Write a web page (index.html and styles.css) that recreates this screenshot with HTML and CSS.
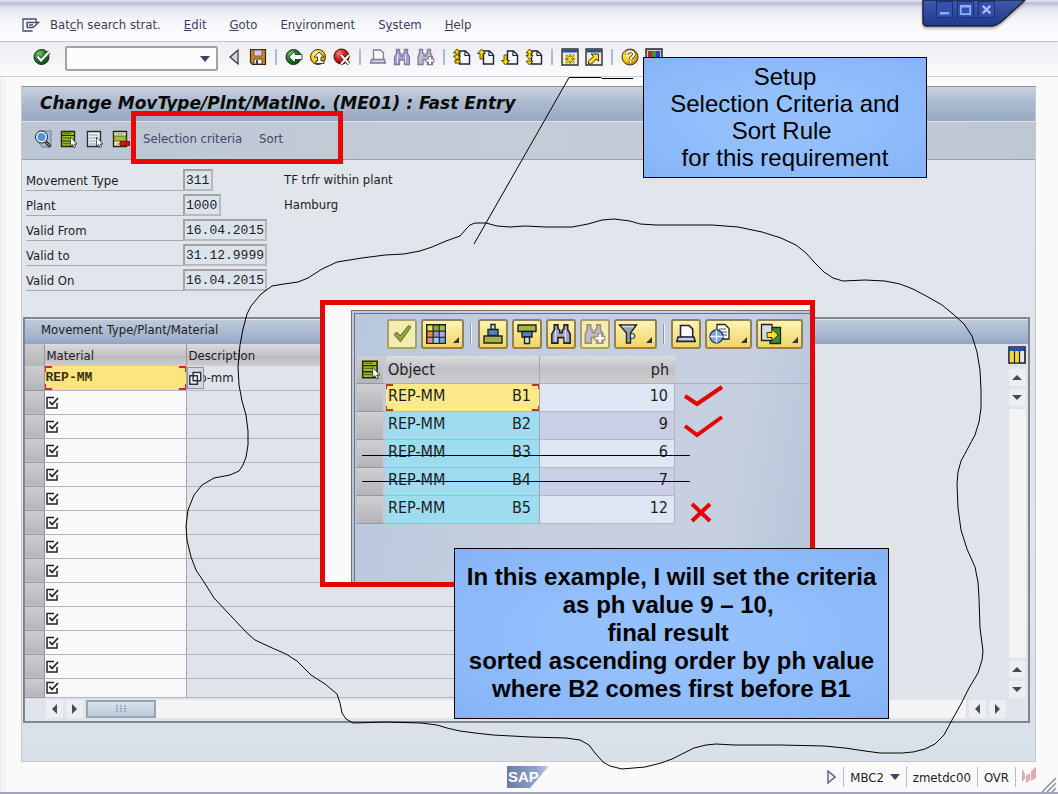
FILE: index.html
```html
<!DOCTYPE html>
<html lang="en">
<head>
  <meta charset="UTF-8">
  <meta name="viewport" content="width=device-width, initial-scale=1.0">
  <title>Change MovType/Plnt/MatlNo. (ME01) : Fast Entry</title>
  <link rel="stylesheet" href="styles.css">
</head>
<body>

  <!-- icon set -->
  <svg class="icon-defs" width="0" height="0" aria-hidden="true">
    <defs>
      <radialGradient id="gGreen" cx="0.35" cy="0.3" r="0.8"><stop offset="0" stop-color="#7fc46f"/><stop offset="0.5" stop-color="#1f7a28"/><stop offset="1" stop-color="#0b3d12"/></radialGradient>
      <radialGradient id="gYellow" cx="0.35" cy="0.3" r="0.8"><stop offset="0" stop-color="#fff58a"/><stop offset="0.6" stop-color="#eec21a"/><stop offset="1" stop-color="#a87608"/></radialGradient>
      <radialGradient id="gRed" cx="0.35" cy="0.3" r="0.8"><stop offset="0" stop-color="#f08080"/><stop offset="0.5" stop-color="#cf1a1a"/><stop offset="1" stop-color="#7a0808"/></radialGradient>
      <linearGradient id="gSap" x1="0" y1="0" x2="1" y2="0"><stop offset="0" stop-color="#6a7ca6"/><stop offset="0.7" stop-color="#8fa3cc"/><stop offset="1" stop-color="#c3d0ea"/></linearGradient>
      <linearGradient id="gCtl" x1="0" y1="0" x2="0" y2="1"><stop offset="0" stop-color="#3f59ae"/><stop offset="1" stop-color="#22398c"/></linearGradient>
    </defs>
    <symbol id="i-menu" viewBox="0 0 18 14"><path d="M14 4.500V1H1v12h9.500M5 4.500h11.500L11 9.500H5.500zM5 4.500v5M7 7h4" fill="none" stroke="#4a4b6c" stroke-width="1.300"/></symbol>
    <symbol id="i-ok" viewBox="0 0 18 18"><circle cx="8.500" cy="9" r="7.500" fill="url(#gGreen)" stroke="#0c3512"/><path d="M4.500 8.500l3.500 4L16 4" fill="none" stroke="#1a3a1a" stroke-width="4"/><path d="M4.500 8.500l3.500 4L16 4" fill="none" stroke="#fff" stroke-width="2.400"/></symbol>
    <symbol id="i-left" viewBox="0 0 18 18"><path d="M13 2v14L5 9z" fill="#d4d4d4" stroke="#333" stroke-width="1.200"/></symbol>
    <symbol id="i-save" viewBox="0 0 18 18"><path d="M1.500 1.500h15v15h-13l-2-2z" fill="#c8842c" stroke="#3a2308" stroke-width="1.200"/><path d="M5 2h8v6H5z" fill="#d3c8e4" stroke="#6b4a20" stroke-width="0.800"/><path d="M5 11h8v5H5z" fill="#efefef" stroke="#3a2308" stroke-width="0.800"/><path d="M7 12h2v4H7z" fill="#444"/></symbol>
    <symbol id="i-back" viewBox="0 0 18 18"><circle cx="8.500" cy="9" r="7.500" fill="url(#gGreen)" stroke="#0c3512"/><path d="M4 9l6-6v3.500h7v5h-7V15z" fill="#fff" stroke="#12300f" stroke-width="0.800"/></symbol>
    <symbol id="i-up" viewBox="0 0 18 18"><circle cx="9" cy="9" r="7.500" fill="url(#gYellow)" stroke="#4a3304"/><path d="M5 9l5-5 5 5h-3v4h3v2.500H7V13h1.500V9z" fill="#fff" stroke="#3a2b05" stroke-width="0.900"/></symbol>
    <symbol id="i-cancel" viewBox="0 0 18 18"><circle cx="8.500" cy="8.500" r="7.500" fill="url(#gRed)" stroke="#3d0505"/><path d="M8 7l8 9M16 7l-8 9" stroke="#420" stroke-width="3.600"/><path d="M8 7l8 9M16 7l-8 9" stroke="#fff" stroke-width="2"/></symbol>
    <symbol id="i-print" viewBox="0 0 18 18"><path d="M4.500 2h7l3 3v7h-10z" fill="#fdfbff" stroke="currentColor" stroke-width="1.300"/><path d="M2.500 11.500h13l1 3.500h-15z" fill="#cfd0de" stroke="currentColor" stroke-width="1.300"/></symbol>
    <symbol id="i-find" viewBox="0 0 18 18"><path d="M3.500 1.500h3v3L8 6v2h2V6l1.500-1.500v-3h3v4l2 3.500v7.500h-5V12h-5v4.500h-5V9l2-3.500z" fill="#a7a1cb" stroke="currentColor" stroke-width="1.300"/><path d="M4.500 6v9M12.500 6v9" stroke="#e4e1f3"/></symbol>
    <symbol id="i-findnext" viewBox="0 0 18 18"><path d="M2.500 1.500h3v3L7 6v2h2V6l1.500-1.500v-3h3v4l2 3.500v7.500h-5V12H6v4.500H1V9l1.500-3.500z" fill="#c0bace" stroke="currentColor" stroke-width="1.300"/><path d="M13 8v9M8.500 12.500h9" stroke="currentColor" stroke-width="4"/><path d="M13 9v7M9.500 12.500h7" stroke="#fff" stroke-width="2"/></symbol>
    <symbol id="i-sheet" viewBox="0 0 18 18"><path d="M6.500 3h6l4 4v9h-10z" fill="#f7f5ff" stroke="#222438" stroke-width="1.400"/><path d="M12 3v4.500h4" fill="none" stroke="#222438" stroke-width="1.200"/></symbol>
    <symbol id="i-first" viewBox="0 0 18 18"><use href="#i-sheet"/><path d="M4 1l3.500 4H5v3h2.500L4 12 .5 8H3V5H.5zM2 12h5v3H2z" fill="#f5d814" stroke="#3f3600" stroke-width="0.900"/></symbol>
    <symbol id="i-prev" viewBox="0 0 18 18"><use href="#i-sheet"/><path d="M4.500 1l4 4.500H6V11H3V5.500H.5z" fill="#f5d814" stroke="#3f3600" stroke-width="0.900"/></symbol>
    <symbol id="i-next" viewBox="0 0 18 18"><use href="#i-sheet"/><path d="M4.500 17l4-4.500H6V7H3v5.500H.5z" fill="#f5d814" stroke="#3f3600" stroke-width="0.900"/></symbol>
    <symbol id="i-last" viewBox="0 0 18 18"><use href="#i-sheet"/><path d="M4.500 1L8 5H6v2.500h2L4.500 11.500 1 7.500h2V5H1zM4.500 17L8 13H1z" fill="#f5d814" stroke="#3f3600" stroke-width="0.900"/></symbol>
    <symbol id="i-session" viewBox="0 0 18 18"><path d="M1 1h16v16H1z" fill="#efe9e2" stroke="#332e24" stroke-width="1.400"/><path d="M1.500 1.500h15v3h-15z" fill="#20529c"/><path d="M9 6v10M4 11h10M5 7l8 8M13 7l-8 8" stroke="#4a4000" stroke-width="2"/><path d="M9 6v10M4 11h10M5 7l8 8M13 7l-8 8" stroke="#f5de1c" stroke-width="1.200"/></symbol>
    <symbol id="i-shortcut" viewBox="0 0 18 18"><path d="M1 1h16v16H1z" fill="#efe9e2" stroke="#332e24" stroke-width="1.400"/><path d="M1.500 1.500h15v3h-15z" fill="#20529c"/><path d="M6 6h7.500v7l-2.500-2-4.500 5H3.500v-3l5-4.500z" fill="#f5de1c" stroke="#3f3600"/></symbol>
    <symbol id="i-help" viewBox="0 0 18 18"><circle cx="9" cy="9" r="8" fill="url(#gYellow)" stroke="#4a3304"/><path d="M5.500 7c0-5 7.500-5 7.500-.5 0 2.500-3.500 2.500-3.500 5M9.500 13v2.500" fill="none" stroke="#4a3304" stroke-width="3.400"/><path d="M5.500 7c0-5 7.500-5 7.500-.5 0 2.500-3.500 2.500-3.500 5M9.500 13v2.500" fill="none" stroke="#fff" stroke-width="2"/></symbol>
    <symbol id="i-monitor" viewBox="0 0 18 18"><path d="M1 1h16v13H1z" fill="#c9c9c9" stroke="#222" stroke-width="1.400"/><path d="M3 3h4v9H3z" fill="#c82020"/><path d="M7 3h4v9H7z" fill="#23a23a"/><path d="M11 3h4v9h-4z" fill="#2b3fbf"/></symbol>
    <symbol id="i-detail" viewBox="0 0 18 18"><path d="M5 1h12v16H8L5 13z" fill="#a9b8cf" stroke="#6c7a92"/><circle cx="7.500" cy="7" r="6" fill="#f2f7fc" stroke="#123"/><circle cx="7.500" cy="7" r="4" fill="#4d96e4"/><path d="M11.500 11.500l4.500 5" stroke="#111" stroke-width="3"/><path d="M11.500 11.500l4 4.500" stroke="#cdd6e4"/></symbol>
    <symbol id="i-selall" viewBox="0 0 18 18"><path d="M1.500 1.500h13v15h-13z" fill="#a6bf2c" stroke="#22280a" stroke-width="1.400"/><path d="M2 5.500h12M2 11h12" stroke="#22280a" stroke-width="1.200"/><path d="M3 3.500h8M3 8h8M3 13.500h8" stroke="#4e7a18" stroke-width="1.300"/><path d="M10.500 7v9l2-1.500 1.500 3 1.600-.7-1.400-2.800h2.800z" fill="#fff" stroke="#222" stroke-width="0.700"/></symbol>
    <symbol id="i-desel" viewBox="0 0 18 18"><path d="M1.500 1.500h13v15h-13z" fill="#eef1f4" stroke="#2a2d33" stroke-width="1.400"/><path d="M3.500 5h8M3.500 8h8M3.500 11h6M3.500 14h6" stroke="#8b98a8" stroke-width="1.200"/><path d="M10.500 7v9l2-1.500 1.500 3 1.600-.7-1.400-2.800h2.800z" fill="#fff" stroke="#222" stroke-width="0.700"/></symbol>
    <symbol id="i-delrow" viewBox="0 0 18 18"><path d="M1.500 1.500h13v15h-13z" fill="#f1ebd0" stroke="#22280a" stroke-width="1.400"/><path d="M2 6h12v5H2z" fill="#a6bf2c" stroke="#4e5a14" stroke-width="0.800"/><path d="M4 4h8M4 14h5" stroke="#888"/><path d="M8 11.500h10v4H8z" fill="#d21111" stroke="#6d0606" stroke-width="0.800"/></symbol>
    <symbol id="i-tick" viewBox="0 0 22 22"><path d="M3 11.500l3-2.500 3 4L17.500 2.500 20 4 9.500 19z" fill="#8fa83e" stroke="#5d6e2a"/></symbol>
    <symbol id="i-grid" viewBox="0 0 22 22"><path d="M1 1h20v20H1z" fill="#222"/><path d="M2.500 2.500h5v5h-5z" fill="#f4e04a"/><path d="M8.700 2.500h5v5h-5z" fill="#7cab3a"/><path d="M14.800 2.500h5v5h-5z" fill="#9bbf53"/><path d="M2.500 8.700h5v5h-5z" fill="#e88a3a"/><path d="M8.700 8.700h5v5h-5z" fill="#9a8ccf"/><path d="M14.800 8.700h5v5h-5z" fill="#b4a6dd"/><path d="M2.500 14.800h5v5h-5z" fill="#f0848c"/><path d="M8.700 14.800h5v5h-5z" fill="#8fd8ee"/><path d="M14.800 14.800h5v5h-5z" fill="#6fa4e0"/></symbol>
    <symbol id="i-asc" viewBox="0 0 22 22"><path d="M9 1.500h4v5H9z" fill="#cfe0ee" stroke="#222" stroke-width="1.400"/><path d="M6 6.500h10v6H6z" fill="#4d86bd" stroke="#222" stroke-width="1.400"/><path d="M2 13h18v7H2z" fill="#a3b544" stroke="#222" stroke-width="1.400"/></symbol>
    <symbol id="i-desc" viewBox="0 0 22 22"><path d="M2 2h18v6.500H2z" fill="#a3b544" stroke="#222" stroke-width="1.400"/><path d="M6 8.500h10V14H6z" fill="#4d86bd" stroke="#222" stroke-width="1.400"/><path d="M8.500 14h5v6.500h-5z" fill="#cfe0ee" stroke="#222" stroke-width="1.400"/></symbol>
    <symbol id="i-filter" viewBox="0 0 22 22"><path d="M1.500 2h17l-6 8v10h-4V10z" fill="#94a3b8" stroke="#222" stroke-width="1.400"/><path d="M4 3.500h12" stroke="#d6deea" stroke-width="1.500"/><circle cx="14.500" cy="13" r="2.500" fill="#cfd6df" stroke="#222"/></symbol>
    <symbol id="i-view" viewBox="0 0 22 22"><path d="M8 1.500h8l4 4V16H8z" fill="#fff" stroke="#222" stroke-width="1.300"/><path d="M10 6h7M10 9h8M12 12h6" stroke="#555"/><circle cx="7.500" cy="13.500" r="6.500" fill="#7da6dc" stroke="#1c2c66" stroke-width="1.300"/><path d="M7.500 7v13M1 13.500h13" stroke="#e8f1fc" stroke-width="1.400"/></symbol>
    <symbol id="i-export" viewBox="0 0 22 22"><path d="M10 4.500h10.500v16H10z" fill="#3f8a2c" stroke="#182c10" stroke-width="1.300"/><path d="M1.500 1.500H12v16H1.500z" fill="#d5dbe6" stroke="#222" stroke-width="1.300"/><path d="M7 9.500h5V6l6 6-6 6v-3.500H7z" fill="#f7e21c" stroke="#3f3600"/></symbol>
    <symbol id="i-config" viewBox="0 0 18 18"><path d="M1 1h16v16H1z" fill="#e9e6da" stroke="#161a28" stroke-width="1.600"/><path d="M1.500 1.500h15v3.500h-15z" fill="#2450a0"/><path d="M1.800 5h4.500v11.200H1.800zM7 5h4v11.200H7z" fill="#f4dd2a"/><path d="M6.500 5v12M11.500 5v12" stroke="#161a28" stroke-width="1.200"/></symbol>
    <symbol id="i-match" viewBox="0 0 16 18"><path d="M5.500 2.500h8v9h-8zM2 6h8v9H2z" fill="#fff" stroke="#32323c" stroke-width="1.600"/></symbol>
  </svg>

  <div class="window">
    <header class="menubar">
      <svg class="menu-icon"><use href="#i-menu"/></svg>
      <nav class="menus">
        <a href="#">Bat<u>c</u>h search strat.</a>
        <a href="#"><u>E</u>dit</a>
        <a href="#"><u>G</u>oto</a>
        <a href="#">En<u>v</u>ironment</a>
        <a href="#">S<u>y</u>stem</a>
        <a href="#"><u>H</u>elp</a>
      </nav>
      <div class="window-controls">
        <svg class="controls-shape" viewBox="0 0 104 28"><path d="M1 0v22q0 4 4 4h63q6 0 11-4L103 0z" fill="url(#gCtl)" stroke="#1b2443" stroke-width="1.500"/></svg>
        <button aria-label="Minimize"><svg viewBox="0 0 16 16"><path d="M3 12h10" stroke="#8fb2ff" stroke-width="2.500"/></svg></button>
        <button aria-label="Maximize"><svg viewBox="0 0 16 16"><path d="M3 4h10v9H3zM3 5h10" fill="none" stroke="#8fb2ff" stroke-width="1.800"/></svg></button>
        <button aria-label="Close"><svg viewBox="0 0 16 16"><path d="M4 4l8 8M12 4l-8 8" stroke="#a9c4ff" stroke-width="2.400"/></svg></button>
      </div>
    </header>

    <div class="toolbar">
      <button class="tool" aria-label="Enter"><svg><use href="#i-ok"/></svg></button>
      <div class="command">
        <input type="text" aria-label="Command field">
        <button class="command-drop" aria-label="Show history"></button>
      </div>
      <button class="tool" aria-label="Collapse"><svg><use href="#i-left"/></svg></button>
      <button class="tool" aria-label="Save"><svg><use href="#i-save"/></svg></button>
      <span class="sep"></span>
      <button class="tool" aria-label="Back"><svg><use href="#i-back"/></svg></button>
      <button class="tool" aria-label="Exit"><svg><use href="#i-up"/></svg></button>
      <button class="tool" aria-label="Cancel"><svg><use href="#i-cancel"/></svg></button>
      <span class="sep"></span>
      <button class="tool dim" aria-label="Print"><svg><use href="#i-print"/></svg></button>
      <button class="tool dim" aria-label="Find"><svg><use href="#i-find"/></svg></button>
      <button class="tool dim" aria-label="Find next"><svg><use href="#i-findnext"/></svg></button>
      <span class="sep"></span>
      <button class="tool" aria-label="First page"><svg><use href="#i-first"/></svg></button>
      <button class="tool" aria-label="Previous page"><svg><use href="#i-prev"/></svg></button>
      <button class="tool" aria-label="Next page"><svg><use href="#i-next"/></svg></button>
      <button class="tool" aria-label="Last page"><svg><use href="#i-last"/></svg></button>
      <span class="sep"></span>
      <button class="tool" aria-label="New session"><svg><use href="#i-session"/></svg></button>
      <button class="tool" aria-label="Create shortcut"><svg><use href="#i-shortcut"/></svg></button>
      <span class="sep"></span>
      <button class="tool" aria-label="Help"><svg><use href="#i-help"/></svg></button>
      <button class="tool" aria-label="Customize layout"><svg><use href="#i-monitor"/></svg></button>
    </div>

    <main class="panel">
      <h1 class="title">Change MovType/Plnt/MatlNo. (ME01) : Fast Entry</h1>

      <div class="app-toolbar">
        <button class="app-tool" aria-label="Details"><svg><use href="#i-detail"/></svg></button>
        <button class="app-tool" aria-label="Select all"><svg><use href="#i-selall"/></svg></button>
        <button class="app-tool" aria-label="Deselect all"><svg><use href="#i-desel"/></svg></button>
        <button class="app-tool" aria-label="Delete row"><svg><use href="#i-delrow"/></svg></button>
        <button class="text-btn">Selection criteria</button>
        <button class="text-btn">Sort</button>
      </div>

      <form class="fields">
        <div class="field"><label for="mtype">Movement Type</label><input id="mtype" class="w3" value="311" readonly><span>TF trfr within plant</span></div>
        <div class="field"><label for="plant">Plant</label><input id="plant" class="w4" value="1000" readonly><span>Hamburg</span></div>
        <div class="field"><label for="vfrom">Valid From</label><input id="vfrom" class="w10" value="16.04.2015" readonly></div>
        <div class="field"><label for="vto">Valid to</label><input id="vto" class="w10" value="31.12.9999" readonly></div>
        <div class="field"><label for="von">Valid On</label><input id="von" class="w10" value="16.04.2015" readonly></div>
      </form>

      <section class="grid-frame">
        <h2 class="grid-title">Movement Type/Plant/Material</h2>
        <div class="grid-body">
          <table class="grid">
            <thead>
              <tr><th class="sel"></th><th class="mat">Material</th><th>Description</th></tr>
            </thead>
            <tbody>
              <tr>
                <td class="sel"></td>
                <td class="mat focus"><input class="mat-input" value="REP-MM" aria-label="Material"></td>
                <td class="desc">rep-mm<button class="match" aria-label="Search help"><svg><use href="#i-match"/></svg></button></td>
              </tr>
              <tr><td class="sel"></td><td class="mat"><input type="checkbox" checked aria-label="Material 2"></td><td></td></tr>
              <tr><td class="sel"></td><td class="mat"><input type="checkbox" checked aria-label="Material 3"></td><td></td></tr>
              <tr><td class="sel"></td><td class="mat"><input type="checkbox" checked aria-label="Material 4"></td><td></td></tr>
              <tr><td class="sel"></td><td class="mat"><input type="checkbox" checked aria-label="Material 5"></td><td></td></tr>
              <tr><td class="sel"></td><td class="mat"><input type="checkbox" checked aria-label="Material 6"></td><td></td></tr>
              <tr><td class="sel"></td><td class="mat"><input type="checkbox" checked aria-label="Material 7"></td><td></td></tr>
              <tr><td class="sel"></td><td class="mat"><input type="checkbox" checked aria-label="Material 8"></td><td></td></tr>
              <tr><td class="sel"></td><td class="mat"><input type="checkbox" checked aria-label="Material 9"></td><td></td></tr>
              <tr><td class="sel"></td><td class="mat"><input type="checkbox" checked aria-label="Material 10"></td><td></td></tr>
              <tr><td class="sel"></td><td class="mat"><input type="checkbox" checked aria-label="Material 11"></td><td></td></tr>
              <tr><td class="sel"></td><td class="mat"><input type="checkbox" checked aria-label="Material 12"></td><td></td></tr>
              <tr><td class="sel"></td><td class="mat"><input type="checkbox" checked aria-label="Material 13"></td><td></td></tr>
              <tr class="last"><td class="sel"></td><td class="mat"><input type="checkbox" checked aria-label="Material 14"></td><td></td></tr>
            </tbody>
          </table>
          <div class="vscroll">
            <button class="config" aria-label="Configuration"><svg><use href="#i-config"/></svg></button>
            <button class="arrow up" aria-label="Line up"></button>
            <button class="arrow down" aria-label="Line down"></button>
            <div class="track"></div>
            <button class="arrow up" aria-label="Page up"></button>
            <button class="arrow down" aria-label="Page down"></button>
          </div>
        </div>
        <div class="hscroll">
          <button class="arrow left" aria-label="Column left"></button>
          <button class="arrow right" aria-label="Column right"></button>
          <div class="track"><div class="thumb"><svg viewBox="0 0 10 7"><path d="M0 1h2M4 1h2M8 1h2M0 3.500h2M4 3.500h2M8 3.500h2M0 6h2M4 6h2M8 6h2" stroke="#7a849a"/></svg></div></div>
          <button class="arrow left" aria-label="Page left"></button>
          <button class="arrow right" aria-label="Page right"></button>
        </div>
      </section>
    </main>

    <footer class="statusbar">
      <svg class="sap-logo" viewBox="0 0 42 22"><path d="M0 0h42L23 22H0z" fill="url(#gSap)"/><text x="1" y="16" class="sap-text">SAP</text></svg>
      <div class="status">
        <svg class="status-arrow" viewBox="0 0 9 14"><path d="M1 1v12l7-6z" fill="#eef1f8" stroke="#5b6a90" stroke-width="1.500"/></svg>
        <button class="system">MBC2</button>
        <span>zmetdc00</span>
        <span>OVR</span>
        <span><svg class="signal" viewBox="0 0 14 16"><path d="M0 2l3 5v5l-3 3zM4 9l4-3v7l-4 3zM9 4l5-4v11l-5 3z" fill="#e3a9ae"/></svg></span>
      </div>
      <svg class="grip" viewBox="0 0 14 14"><path d="M0 14L14 0M5 14l9-9M10 14l4-4" stroke="#8a8c96" stroke-width="1.500"/></svg>
    </footer>

    <!-- enlarged hit list -->
    <section class="popup">
      <div class="popup-frame">
        <div class="popup-tools">
          <button class="ptool flat" aria-label="Accept"><svg><use href="#i-tick"/></svg></button>
          <button class="ptool menu" aria-label="Layout"><svg><use href="#i-grid"/></svg></button>
          <span class="psep"></span>
          <button class="ptool" aria-label="Sort ascending"><svg><use href="#i-asc"/></svg></button>
          <button class="ptool" aria-label="Sort descending"><svg><use href="#i-desc"/></svg></button>
          <button class="ptool" aria-label="Find value"><svg><use href="#i-find"/></svg></button>
          <button class="ptool flat off" aria-label="Find next value"><svg><use href="#i-findnext"/></svg></button>
          <button class="ptool menu" aria-label="Filter"><svg><use href="#i-filter"/></svg></button>
          <span class="psep"></span>
          <button class="ptool" aria-label="Print list"><svg><use href="#i-print"/></svg></button>
          <button class="ptool menu wide" aria-label="Views"><svg><use href="#i-view"/></svg></button>
          <button class="ptool menu wide" aria-label="Export"><svg><use href="#i-export"/></svg></button>
        </div>
        <table class="hits">
          <thead>
            <tr><th class="psel"><svg><use href="#i-selall"/></svg></th><th class="obj">Object</th><th class="ph">ph</th><th class="rest"></th></tr>
          </thead>
          <tbody>
            <tr><td class="psel"></td><td class="obj focus"><div><span>REP-MM</span><span>B1</span></div></td><td class="ph">10</td><td class="rest"></td></tr>
            <tr><td class="psel"></td><td class="obj"><div><span>REP-MM</span><span>B2</span></div></td><td class="ph">9</td><td class="rest"></td></tr>
            <tr><td class="psel"></td><td class="obj"><div><span>REP-MM</span><span>B3</span></div></td><td class="ph">6</td><td class="rest"></td></tr>
            <tr><td class="psel"></td><td class="obj"><div><span>REP-MM</span><span>B4</span></div></td><td class="ph">7</td><td class="rest"></td></tr>
            <tr><td class="psel"></td><td class="obj"><div><span>REP-MM</span><span>B5</span></div></td><td class="ph">12</td><td class="rest"></td></tr>
          </tbody>
        </table>
      </div>
    </section>

    <div class="highlight"></div>

    <!-- freehand marks -->
    <svg class="marks" viewBox="0 0 1058 794" aria-hidden="true">
      <g fill="none" stroke="#000" stroke-width="1">
        <path d="M633 78.500H602L601 77.500H569L474 244"/>
        <path d="M467 228L470 225 475 223 486 223 497 226 510 227 525 226 545 227 572 227 588 224 602 220 614 219 630 221 640 224 656 225 685 225 712 225 738 227 762 232 781 238 796 245 806 253 815 263 824 272 833 278 843 281 865 280 885 281 900 284 913 289 928 297 942 305 953 314 964 324 972 336 977 352 980 370 981 390 981 408 979 422 975 435 968 448 961 461 958 472 957 484 958 508 961 530 967 549 975 567 978 582 979 598 980 628 983 651 982 660 978 673 969 688 961 704 952 720 944 735 935 744 925 749 913 752 902 753 880 753 865 751 845 748 824 746 780 745 734 745 716 744 706 745 694 748 684 753 672 759 661 763 645 767 622 769 610 766 603 762 595 753 589 745 580 740 566 738 530 737 493 735 475 733 460 731 447 728 437 725 421 723 385 722 353 723 346 719 342 713 340 703 337 694 325 684 311 675 297 661 286 654 270 647 255 640 247 633 230 615 214 598 204 582 196 570 191 557 187 540 186 526 188 510 194 495 202 485 214 478 230 475 239 471 243 465 246 457 248 445 248 431 246 415 242 401 239 385 238 367 240 345 243 329 247 314 251 306 261 294 272 286 284 284 298 282 308 278 322 269 337 262 362 258 385 255 404 254 420 251 432 247 446 241 460 236Z"/>
        <path d="M362 455.500H690M362 481.500H690"/>
      </g>
      <g fill="none" stroke="#e60505" stroke-width="4">
        <path d="M685 396l12 8 25-17M685 426l12 9 25-18M692 504l18 17M710 504l-18 17"/>
      </g>
    </svg>

    <aside class="callout setup">Setup<br>Selection Criteria and<br>Sort Rule&nbsp;<br>for this requirement</aside>
    <aside class="callout example">In this example, I will set the criteria<br>as ph value 9 – 10,&nbsp;<br>final result&nbsp;<br>sorted ascending order by ph value<br>where B2 comes first before B1</aside>
  </div>

</body>
</html>
```

FILE: styles.css
```css
* {
  box-sizing: border-box;
  margin: 0;
  padding: 0;
}

body {
  font-family: "DejaVu Sans Condensed", "DejaVu Sans", sans-serif;
  font-size: 13px;
  color: #1c1c22;
  background: #fbfbfc;
}

button {
  border: none;
  background: none;
  font: inherit;
  color: inherit;
  cursor: pointer;
}

.icon-defs {
  position: absolute;
}

.window {
  position: relative;
  display: flex;
  flex-direction: column;
  min-height: 100vh;
  overflow: hidden;
  background: linear-gradient(to right, #eef0f4, #fbfafb 8px);
}

/* menu bar */
.menubar {
  display: flex;
  align-items: center;
  gap: 10px;
  height: 42px;
  padding: 8px 22px 0;
  border-bottom: 1px solid #c4c5cc;
  background: linear-gradient(#e4e8f4 0, #b9bfd8 3px, #e3e5ef 8px, #f8f8fb 22px, #fbfbfc);
}

.menu-icon {
  width: 18px;
  height: 14px;
}

.menus {
  display: flex;
  gap: 23px;
}

.menus a {
  color: #3d3c5e;
  text-decoration: none;
}

.window-controls {
  position: absolute;
  top: 0;
  right: 32px;
  display: flex;
  gap: 4px;
  width: 104px;
  height: 28px;
  padding: 1px 14px;
}

.controls-shape {
  position: absolute;
  inset: 0;
  filter: drop-shadow(0 2px 1px rgba(90, 60, 40, 0.4));
}

.window-controls button {
  position: relative;
  width: 17px;
  height: 17px;
  border: 1px solid #1c2f7c;
  background: #3450aa;
}

.window-controls button svg {
  display: block;
  width: 15px;
  height: 15px;
}

/* standard toolbar */
.toolbar {
  display: flex;
  align-items: center;
  height: 35px;
  padding: 0 30px 4px;
  border-bottom: 1px solid #cfd0d6;
  background: linear-gradient(#ededf2, #fbfbfc);
}

.tool {
  width: 24px;
  height: 24px;
  padding: 3px;
}

.tool svg,
.app-tool svg {
  display: block;
  width: 18px;
  height: 18px;
}

.tool.dim {
  color: #85789f;
}

.command {
  display: flex;
  width: 153px;
  height: 25px;
  margin: 2px 4px 0 11px;
  border: 2px solid #a6a2a4;
  border-radius: 2px;
  background: #fdfcfd;
}

.command input {
  flex: 1;
  min-width: 0;
  border: none;
  outline: none;
  background: none;
}

.command-drop {
  width: 22px;
}

.command-drop::after,
.system::after {
  content: "";
  display: inline-block;
  border: 5px solid transparent;
  border-top: 6px solid #3c4468;
  border-bottom: none;
  vertical-align: middle;
}

.sep {
  width: 12px;
  height: 16px;
  background: linear-gradient(#a9bad3, #a9bad3) center / 2px 100% no-repeat;
}

/* work area */
.panel {
  flex: 1;
  margin: 9px 22px 0 21px;
  border: 1px solid #c5c9d1;
  border-top-color: #8d929c;
  background: linear-gradient(#e1e6ed, #e0e5eb 60%, #dae0e8);
}

.title {
  height: 34px;
  padding-left: 18px;
  font-family: "DejaVu Sans", sans-serif;
  font-size: 17px;
  font-style: italic;
  line-height: 32px;
  color: #0a0a0a;
  background: linear-gradient(#c8d1df, #a9b8ce 50%, #98a9c3);
}

.app-toolbar {
  display: flex;
  align-items: center;
  height: 39px;
  padding: 0 0 4px 8px;
  border-top: 1px solid #dfe4ec;
  border-bottom: 1px solid #9a9fa8;
  background: linear-gradient(to right, #bcc6d4, #c6ccd7 50%, #bfc7d3);
  color: #43456b;
}

.app-tool {
  width: 26px;
  padding: 0 4px;
}

.text-btn {
  margin: 0 8px 0 9px;
}

.fields {
  padding: 6px 3px 0 4px;
}

.field {
  display: flex;
  align-items: flex-end;
  height: 25px;
}

.field label {
  width: 157px;
  height: 22px;
  line-height: 23px;
  border-bottom: 1px solid #a9aaae;
}

.field input {
  height: 22px;
  padding: 0 0 0 1px;
  border: 2px solid #a2a2a5;
  border-right-color: #b9b9bc;
  border-bottom-color: #b9b9bc;
  background: #dbe4ec;
  font-family: "Liberation Mono", monospace;
  font-size: 13px;
  color: #1c1c22;
}

.field .w3 {
  width: 30px;
  margin-right: 71px;
}

.field .w4 {
  width: 38px;
  margin-right: 63px;
}

.field .w10 {
  width: 84px;
}

.field span {
  line-height: 22px;
}

/* table control */
.grid-frame {
  margin: 26px 5px 37px 1px;
  border: 2px solid #7f8692;
  background: #dfe4eb;
}

.grid-title {
  height: 25px;
  padding-left: 16px;
  border-top: 1px solid #dfe6f0;
  font-size: 13px;
  font-weight: normal;
  line-height: 20px;
  background: linear-gradient(#bfcad9, #9db0cb 80%, #8fa4c2);
}

.grid-body {
  display: flex;
  justify-content: space-between;
}

.grid {
  width: 580px;
  border-collapse: collapse;
  table-layout: fixed;
}

.grid th {
  height: 22px;
  padding-left: 2px;
  border-right: 1px solid #97979b;
  font-weight: normal;
  text-align: left;
  background: linear-gradient(#dcdce0, #bcbcc0 60%, #cfcfd3);
}

.grid td {
  height: 24px;
  padding-left: 1px;
  border-right: 1px solid #a3a5ab;
  border-bottom: 1px solid #b2b5bd;
}

.grid .last td {
  height: 19px;
}

.grid .sel {
  width: 19px;
  border-color: #97979b;
  background: linear-gradient(#cdcdd1, #b5b4b8);
}

.grid .mat {
  width: 142px;
}

.grid td.mat {
  background: #fbfafb;
}

.grid td.focus {
  background: #fce57c;
}

.focus {
  position: relative;
}

.focus::before,
.focus::after {
  content: "";
  position: absolute;
  top: 0;
  bottom: 0;
  width: 6px;
  background:
    linear-gradient(#cf2b2b, #cf2b2b) 0 0 / 100% 2px no-repeat,
    linear-gradient(#cf2b2b, #cf2b2b) 0 100% / 100% 2px no-repeat;
}

.focus::before {
  left: 0;
  border-left: 1px solid #cf2b2b;
  border-image: linear-gradient(#cf2b2b 6px, transparent 6px calc(100% - 6px), #cf2b2b calc(100% - 6px)) 1;
}

.focus::after {
  right: 0;
  border-right: 1px solid #cf2b2b;
  border-image: linear-gradient(#cf2b2b 6px, transparent 6px calc(100% - 6px), #cf2b2b calc(100% - 6px)) 1;
}

.mat-input {
  display: block;
  width: 100%;
  border: none;
  outline: none;
  background: none;
  font-family: "Liberation Mono", monospace;
  font-size: 13px;
  font-weight: bold;
  color: #3a300c;
}

.grid input[type="checkbox"] {
  display: block;
  appearance: none;
  width: 13px;
  height: 13px;
  background: url("data:image/svg+xml,%3Csvg xmlns='http://www.w3.org/2000/svg' viewBox='0 0 13 13'%3E%3Cpath d='M8 1.500H1v10.500h10V7' fill='none' stroke='%23222' stroke-width='1.500'/%3E%3Cpath d='M3.500 5.500l2.500 3L12 2' fill='none' stroke='%23222' stroke-width='1.800'/%3E%3C/svg%3E");
}

.desc {
  position: relative;
}

.match {
  position: absolute;
  left: 0;
  top: 1px;
  width: 17px;
  height: 22px;
  border: 1px solid #8c90a0;
  background: #d4d8e4;
}

.match svg {
  display: block;
  width: 15px;
  height: 19px;
}

.vscroll {
  display: flex;
  flex-direction: column;
  align-items: center;
  gap: 3px;
  width: 22px;
}

.config {
  width: 20px;
  height: 22px;
  padding: 2px 1px;
}

.config svg {
  display: block;
  width: 18px;
  height: 18px;
}

.track {
  flex: 1;
  background: #f4f4f5;
}

.vscroll .track {
  width: 17px;
}

.arrow {
  display: flex;
  align-items: center;
  justify-content: center;
  width: 17px;
  height: 17px;
  background: #eceef2;
}

.arrow::after {
  content: "";
  border: 5px solid transparent;
}

.up::after {
  border-top: none;
  border-bottom-color: #4a4a50;
}

.down::after {
  border-bottom: none;
  border-top-color: #4a4a50;
}

.left::after {
  border-left: none;
  border-right-color: #4a4a50;
}

.right::after {
  border-right: none;
  border-left-color: #4a4a50;
}

.hscroll {
  display: flex;
  gap: 3px;
  padding: 2px 22px 3px 21px;
}

.hscroll .arrow {
  height: 18px;
}

.thumb {
  display: flex;
  align-items: center;
  justify-content: center;
  width: 70px;
  height: 18px;
  border: 2px solid #9aa3b4;
  background: linear-gradient(#dbe2ec, #bcc8d9);
}

.thumb svg {
  width: 10px;
  height: 7px;
}

/* status bar */
.statusbar {
  display: flex;
  align-items: center;
  height: 32px;
  padding: 0 2px 0;
  border-bottom: 2px solid #a3a3bd;
}

.sap-logo {
  width: 42px;
  height: 22px;
  margin-left: 505px;
}

.sap-text {
  font-family: "Liberation Sans", sans-serif;
  font-size: 15px;
  font-weight: bold;
  fill: #fff;
}

.status {
  display: flex;
  align-items: center;
  margin-left: auto;
  height: 20px;
}

.status-arrow {
  width: 9px;
  height: 14px;
  margin-right: 7px;
}

.status button,
.status span {
  height: 20px;
  padding: 0 6px;
  border-left: 1px solid #bcbcc6;
  line-height: 22px;
}

.system::after {
  margin: -4px 0 0 6px;
}

.signal {
  display: block;
  width: 14px;
  height: 16px;
}

.grip {
  width: 14px;
  height: 14px;
  align-self: flex-end;
}

/* enlarged hit list */
.popup {
  position: absolute;
  left: 320px;
  top: 300px;
  width: 495px;
  height: 287px;
  padding: 5px 0 0 26px;
  border: 5px solid #e60505;
  background: #fbfafb;
  display: flex;
}

.popup-frame {
  flex: 1;
  min-width: 0;
  border: 4px double #77706c;
  border-right: none;
  border-bottom: none;
  background: linear-gradient(100deg, #b9c7dd, #c6cfdf 45%, #c6d0e0 80%, #b6c4d9);
}

.popup-tools {
  display: flex;
  gap: 4px;
  height: 42px;
  padding: 5px 0 0 32px;
}

.ptool {
  flex: none;
  position: relative;
  width: 30px;
  height: 30px;
  padding: 2px;
  border: 2px solid #8f8352;
  border-radius: 3px;
  background: linear-gradient(#fdf3b4, #f0d668);
  color: #22222c;
}

.ptool svg {
  display: block;
  width: 22px;
  height: 22px;
}

.ptool.flat {
  border-color: #aaa06c;
  background: #f4ecb2;
}

.ptool.off {
  color: #9a9378;
}

.ptool.menu {
  width: 43px;
}

.ptool.wide {
  width: 47px;
}

.ptool.menu::after {
  content: "";
  position: absolute;
  right: 3px;
  bottom: 4px;
  border: 3px solid #333;
  border-top-color: transparent;
  border-left-color: transparent;
}

.psep {
  flex: none;
  width: 6px;
  height: 20px;
  margin-top: 5px;
  background: linear-gradient(to right, #8f97a8 50%, #f2f4f8 50%) center / 2px 100% no-repeat;
}

.hits {
  width: 100%;
  border-spacing: 0;
  table-layout: fixed;
  font-size: 16px;
  line-height: 20px;
}

.hits th {
  height: 28px;
  font-weight: normal;
  text-align: left;
  border-bottom: 1px solid #a9b1c0;
  background: linear-gradient(#dddde0, #c0c0c4 50%, #cfcfd2);
}

.hits td {
  height: 28px;
  padding-bottom: 3px;
  border-bottom: 1px solid #b0b8c4;
  border-right: 1px solid #b0b8c4;
}

.hits .psel {
  width: 31px;
  padding-left: 4px;
  border-left: 2px solid #b9c7dd;
  border-right: 3px solid #c0cbdd;
  border-bottom-color: #98989c;
  background: linear-gradient(#cfcfd2, #b4b4b8);
}

.psel svg {
  display: block;
  width: 20px;
  height: 23px;
}

.hits .obj {
  width: 154px;
  padding-left: 2px;
  padding-right: 8px;
  border-right: 1px solid #a4a6ac;
}

.obj div {
  display: flex;
  justify-content: space-between;
}

.hits td.obj {
  background: #9edcf0;
}

.hits td.focus {
  background: #fde98a;
}

.hits .ph {
  width: 135px;
  padding-right: 6px;
  text-align: right;
}

.hits td.ph {
  background: #dde6f2;
}

.hits tr:nth-child(even) td.ph {
  background: #cbcfe6;
}

.hits th.rest {
  background: none;
}

.hits td.rest {
  border: none;
}

/* annotations */
.highlight {
  position: absolute;
  left: 131px;
  top: 111px;
  width: 212px;
  height: 53px;
  border: 5px solid #ee0505;
}

.marks {
  position: absolute;
  left: 0;
  top: 0;
  width: 1058px;
  height: 794px;
  pointer-events: none;
}

.callout {
  position: absolute;
  display: flow-root;
  border: 1px solid #000;
  background: radial-gradient(#94c0fd 30%, #85b4f6);
  font-family: "Liberation Sans", Arial, sans-serif;
  font-size: 24px;
  text-align: center;
  color: #000;
}

.setup {
  left: 643px;
  top: 57px;
  width: 284px;
  padding: 5px 0 6px;
  line-height: 27px;
}

.example {
  left: 454px;
  top: 548px;
  width: 435px;
  padding: 14px 0 15px;
  font-weight: bold;
  line-height: 28px;
}
```
